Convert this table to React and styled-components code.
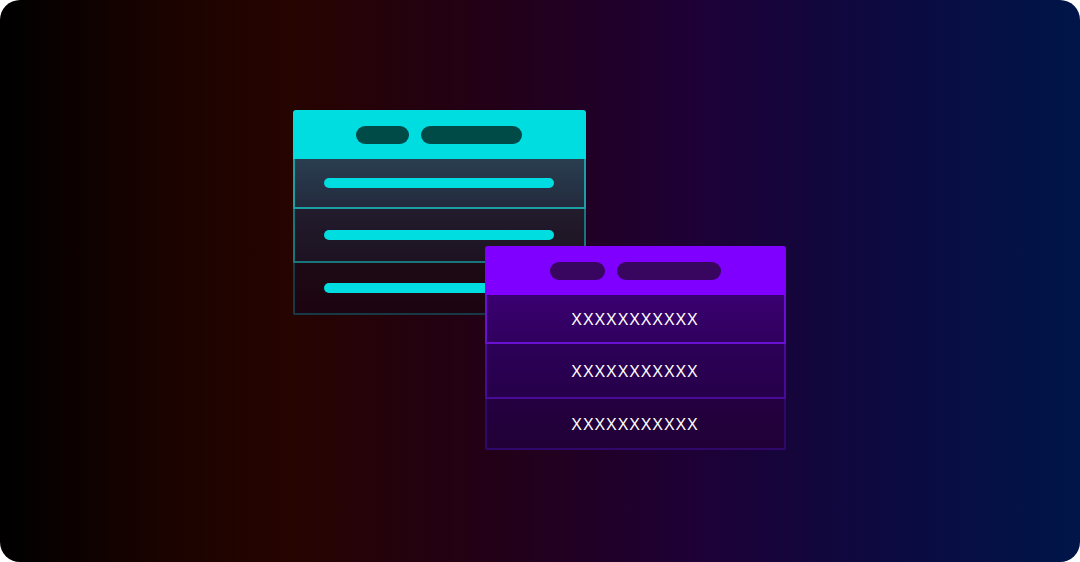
import React from "react";
import styled, { createGlobalStyle } from "styled-components";

const GlobalStyle = createGlobalStyle`
  html, body {
    margin: 0;
    padding: 0;
    background: #ffffff;
  }
  body {
    font-family: "Liberation Sans", Arial, sans-serif;
  }
`;

const Frame = styled.div`
  width: 1080px;
  height: 562px;
  border-radius: 20px;
  overflow: hidden;
  background: linear-gradient(
    90deg,
    #000000 0%,
    #1a0300 15%,
    #260400 27%,
    #230016 45%,
    #1e0036 64%,
    #0c0a40 82%,
    #001548 100%
  );
  display: flex;
  align-items: center;
  justify-content: center;
`;

const Stage = styled.div`
  display: grid;
  grid-template-columns: 192px 101px 200px;
  grid-template-rows: 136px 69px 135px;
  margin: -2px 0 0 -2px;
`;

const Card = styled.div`
  display: flex;
  flex-direction: column;
  grid-column: ${(p) => p.$cols};
  grid-row: ${(p) => p.$rows};
  align-self: start;
  z-index: ${(p) => p.$z};
`;

const Header = styled.div`
  height: 49px;
  border-radius: 3px 3px 0 0;
  background: ${(p) => p.$bg};
  display: flex;
  align-items: center;
  justify-content: center;
  gap: 12px;
`;

const Pill = styled.span`
  width: ${(p) => p.$w}px;
  height: 18px;
  border-radius: 9px;
  background: ${(p) => p.$bg};
`;

const Row = styled.div`
  height: ${(p) => p.$h}px;
  box-sizing: border-box;
  border: 2px solid ${(p) => p.$border};
  border-top: none;
  background: ${(p) => p.$bg};
  display: flex;
  align-items: center;
  justify-content: center;
  &:last-child {
    border-radius: 0 0 2px 2px;
  }
`;

const Bar = styled.span`
  width: 230px;
  height: 10px;
  border-radius: 5px;
  background: #00dde0;
`;

const Label = styled.span`
  padding-top: 3px;
  color: #ffffff;
  font-family: "Liberation Sans", Arial, sans-serif;
  font-size: 16px;
  letter-spacing: 0.9px;
`;

const tealRows = [
  { h: 50, border: "#1c9fa4", bg: "linear-gradient(180deg, #2a3e50 0%, #232a3e 100%)" },
  { h: 54, border: "#17757c", bg: "linear-gradient(180deg, #221c2c 0%, #1d1222 100%)" },
  { h: 52, border: "#173844", bg: "linear-gradient(180deg, #1d0a14 0%, #1c0410 100%)" },
];

const violetRows = [
  { h: 49, border: "#6a10d2", bg: "linear-gradient(180deg, #3a0070 0%, #30005e 100%)" },
  { h: 55, border: "#4a0a98", bg: "linear-gradient(180deg, #2c0058 0%, #26004a 100%)" },
  { h: 51, border: "#30086a", bg: "linear-gradient(180deg, #240040 0%, #210036 100%)" },
];

export default function App() {
  return (
    <>
      <GlobalStyle />
      <Frame>
        <Stage>
          <Card $cols="1 / 3" $rows="1 / 4" $z={1}>
            <Header $bg="#00dde0">
              <Pill $w={53} $bg="#004a48" />
              <Pill $w={101} $bg="#004a48" />
            </Header>
            {tealRows.map((r, i) => (
              <Row key={i} $h={r.h} $border={r.border} $bg={r.bg}>
                <Bar />
              </Row>
            ))}
          </Card>
          <Card $cols="2 / 4" $rows="2 / 4" $z={2}>
            <Header $bg="#8000ff">
              <Pill $w={55} $bg="#38065e" />
              <Pill $w={104} $bg="#38065e" />
            </Header>
            {violetRows.map((r, i) => (
              <Row key={i} $h={r.h} $border={r.border} $bg={r.bg}>
                <Label>XXXXXXXXXXX</Label>
              </Row>
            ))}
          </Card>
        </Stage>
      </Frame>
    </>
  );
}
